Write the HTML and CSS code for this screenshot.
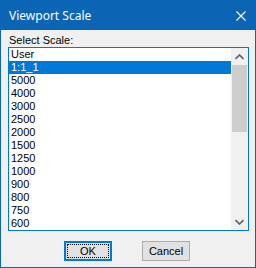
FILE: index.html
```html
<!DOCTYPE html>
<html lang="en">
<head>
  <meta charset="UTF-8">
  <title>Viewport Scale</title>
  <link rel="stylesheet" href="styles.css">
</head>
<body>
  <div class="window">
    <div class="titlebar">
      <span class="title">Viewport Scale</span>
      <svg class="close" width="10" height="10" viewBox="0 0 10 10">
        <path d="M0.5 0.5 L9.5 9.5 M9.5 0.5 L0.5 9.5" stroke="#fff" stroke-width="1.1" fill="none"/>
      </svg>
    </div>
    <div class="content">
      <div class="label">Select Scale:</div>
      <div class="listbox">
        <div class="items">
          <div class="item">User</div>
          <div class="item selected">1:1_1</div>
          <div class="item">5000</div>
          <div class="item">4000</div>
          <div class="item">3000</div>
          <div class="item">2500</div>
          <div class="item">2000</div>
          <div class="item">1500</div>
          <div class="item">1250</div>
          <div class="item">1000</div>
          <div class="item">900</div>
          <div class="item">800</div>
          <div class="item">750</div>
          <div class="item">600</div>
        </div>
        <div class="scrollbar">
          <div class="arrow">
            <svg width="9" height="6" viewBox="0 0 9 6"><path d="M0.5 5 L4.5 1 L8.5 5" stroke="#606060" stroke-width="1.6" fill="none"/></svg>
          </div>
          <div class="track">
            <div class="thumb"></div>
          </div>
          <div class="arrow">
            <svg width="9" height="6" viewBox="0 0 9 6"><path d="M0.5 1 L4.5 5 L8.5 1" stroke="#606060" stroke-width="1.6" fill="none"/></svg>
          </div>
        </div>
      </div>
      <div class="buttons">
        <button class="btn default"><span class="focus">OK</span></button>
        <button class="btn">Cancel</button>
      </div>
    </div>
  </div>
</body>
</html>
```
FILE: styles.css
```css
body {
  margin: 0;
  padding: 0;
}
.window {
  box-sizing: border-box;
  width: 256px;
  height: 268px;
  border: 1px solid #0c64b4;
  background: #f0f0f0;
  font-family: "Liberation Sans", Arial, sans-serif;
  font-size: 11px;
  color: #000;
}
.titlebar {
  height: 29px;
  background: #0c64b4;
  display: flex;
  align-items: center;
  padding: 0 9px 0 8px;
}
.title {
  flex: 1;
  color: #fff;
  font-family: "Noto Sans", "Open Sans", sans-serif;
  font-size: 12px;
}
.close {
  margin-right: 0;
}
.content {
  padding: 3px 0 0 7px;
}
.label {
  height: 14px;
  line-height: 14px;
  padding-left: 1px;
}
.listbox {
  box-sizing: border-box;
  width: 241px;
  height: 184px;
  border: 1px solid #0078d7;
  background: #fff;
  display: flex;
}
.items {
  flex: 1;
}
.item {
  height: 13px;
  line-height: 13px;
  padding-left: 2px;
  white-space: nowrap;
}
.item.selected {
  background: #0078d7;
  color: #fff;
}
.scrollbar {
  width: 17px;
  background: #f0f0f0;
  display: flex;
  flex-direction: column;
}
.arrow {
  height: 17px;
  display: flex;
  align-items: center;
  justify-content: center;
}
.track {
  flex: 1;
}
.thumb {
  height: 67px;
  margin: 0 1px;
  background: #cdcdcd;
}
.buttons {
  display: flex;
  gap: 30px;
  padding: 10px 0 0 56px;
}
.btn {
  box-sizing: border-box;
  width: 48px;
  height: 20px;
  padding: 0;
  font-family: "Liberation Sans", Arial, sans-serif;
  font-size: 11px;
  color: #000;
  background: #e1e1e1;
  border: 1px solid #adadad;
}
.btn.default {
  border: 2px solid #0078d7;
  padding: 1px;
}
.focus {
  display: flex;
  align-items: center;
  justify-content: center;
  height: 100%;
  border: 1px dotted #000;
  box-sizing: border-box;
}
```
